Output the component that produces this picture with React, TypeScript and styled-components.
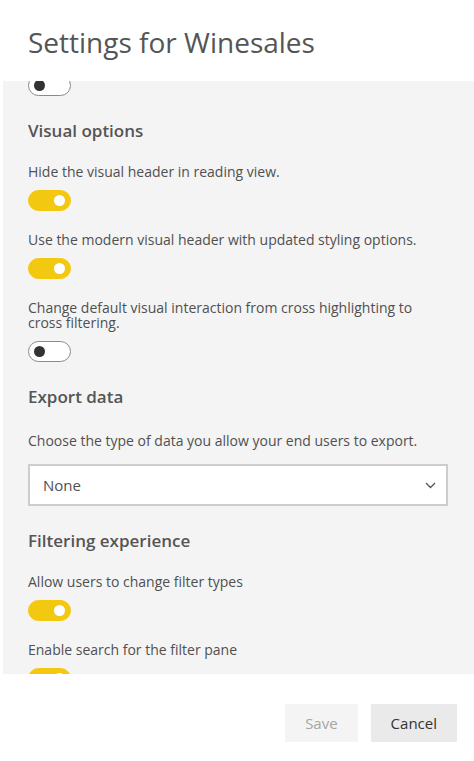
import styled, { createGlobalStyle } from "styled-components";

const GlobalStyle = createGlobalStyle`
    html, body {
        margin: 0;
        padding: 0;
        background: #ffffff;
        font-family: "Open Sans", "Noto Sans", sans-serif;
        color: #505050;
    }
    * {
        box-sizing: border-box;
    }
`;

const Dialog = styled.div`
    width: 474px;
    height: 761px;
    display: flex;
    flex-direction: column;
    background: #ffffff;
    overflow: hidden;
`;

const Header = styled.header`
    height: 81px;
    flex-shrink: 0;
    padding: 24px 28px 0;
`;

const Title = styled.h1`
    margin: 0;
    font-size: 28px;
    line-height: 36px;
    font-weight: 400;
    color: #555555;
`;

const Body = styled.div`
    height: 593px;
    flex-shrink: 0;
    margin-left: 3px;
    background: #f4f4f4;
    overflow: hidden;
`;

const Content = styled.div`
    /* scrolled a little past the top */
    margin-top: -6px;
    padding: 0 25px;
`;

const Section = styled.section`
    margin-bottom: 24px;
`;

const Heading = styled.h2`
    margin: 0 0 22px;
    font-size: 17px;
    line-height: 22px;
    font-weight: 600;
    color: #555555;
`;

const Item = styled.div`
    margin-bottom: 21px;
    &:last-child {
        margin-bottom: 0;
    }
`;

const Label = styled.p`
    margin: 0 0 11px;
    font-size: 14px;
    line-height: 15px;
    color: #505050;
`;

const Description = styled.p`
    margin: 0 0 16px;
    padding-top: 3px;
    font-size: 14px;
    line-height: 15px;
    color: #505050;
`;

const Track = styled.div<{ $on: boolean }>`
    width: 43px;
    height: 21px;
    border-radius: 11px;
    display: flex;
    align-items: center;
    justify-content: ${(p) => (p.$on ? "flex-end" : "flex-start")};
    padding: 0 5px;
    background: ${(p) => (p.$on ? "#f2c811" : "#ffffff")};
    border: 1px solid ${(p) => (p.$on ? "#f2c811" : "#8a8a8a")};
`;

const Knob = styled.span<{ $on: boolean }>`
    width: 11px;
    height: 11px;
    border-radius: 50%;
    background: ${(p) => (p.$on ? "#ffffff" : "#333333")};
`;

const Select = styled.div`
    height: 42px;
    width: 420px;
    display: flex;
    align-items: center;
    justify-content: space-between;
    padding: 0 10px 0 13px;
    background: #ffffff;
    border: 2px solid #cdcdcd;
    font-size: 15px;
    color: #505050;
`;

const Footer = styled.footer`
    flex: 1;
    display: flex;
    justify-content: flex-end;
    align-items: flex-start;
    gap: 13px;
    padding: 30px 17px 0 0;
`;

const Button = styled.button<{ $disabled?: boolean }>`
    height: 38px;
    padding: 0 20px;
    min-width: ${(p) => (p.$disabled ? "72px" : "86px")};
    border: none;
    font-family: inherit;
    font-size: 15px;
    background: ${(p) => (p.$disabled ? "#f4f4f4" : "#eaeaea")};
    color: ${(p) => (p.$disabled ? "#a6a6a6" : "#333333")};
`;

function Toggle({ on }: { on: boolean }) {
    return (
        <Track $on={on}>
            <Knob $on={on} />
        </Track>
    );
}

function Chevron() {
    return (
        <svg width="11" height="7" viewBox="0 0 11 7" fill="none">
            <path d="M1 1l4.5 4.5L10 1" stroke="#555" strokeWidth="1.3" />
        </svg>
    );
}

export default function App() {
    return (
        <Dialog>
            <GlobalStyle />
            <Header>
                <Title>Settings for Winesales</Title>
            </Header>
            <Body>
                <Content>
                    <Section>
                        <Toggle on={false} />
                    </Section>
                    <Section>
                        <Heading>Visual options</Heading>
                        <Item>
                            <Label>Hide the visual header in reading view.</Label>
                            <Toggle on />
                        </Item>
                        <Item>
                            <Label>Use the modern visual header with updated styling options.</Label>
                            <Toggle on />
                        </Item>
                        <Item>
                            <Label>
                                Change default visual interaction from cross highlighting to cross filtering.
                            </Label>
                            <Toggle on={false} />
                        </Item>
                    </Section>
                    <Section>
                        <Heading>Export data</Heading>
                        <Description>Choose the type of data you allow your end users to export.</Description>
                        <Select>
                            None
                            <Chevron />
                        </Select>
                    </Section>
                    <Section>
                        <Heading>Filtering experience</Heading>
                        <Item>
                            <Label>Allow users to change filter types</Label>
                            <Toggle on />
                        </Item>
                        <Item>
                            <Label>Enable search for the filter pane</Label>
                            <Toggle on />
                        </Item>
                    </Section>
                </Content>
            </Body>
            <Footer>
                <Button $disabled>Save</Button>
                <Button>Cancel</Button>
            </Footer>
        </Dialog>
    );
}
